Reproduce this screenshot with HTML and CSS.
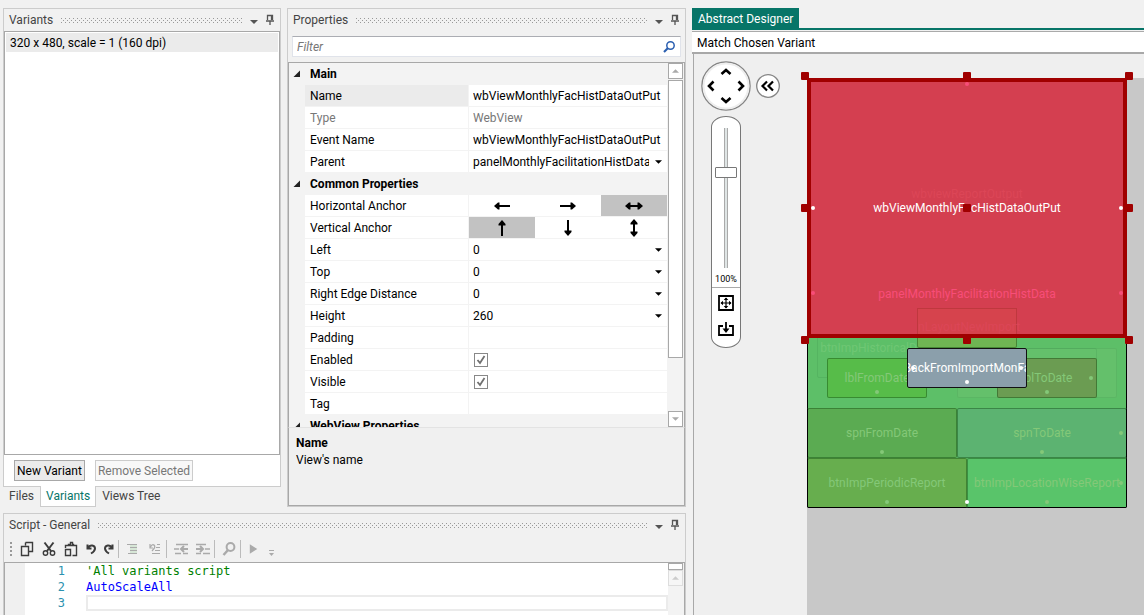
FILE: index.html
```html
<!DOCTYPE html>
<html lang="en">
    <head>
        <title>Abstract Designer</title>
        <meta charset="utf-8">
        <meta name="viewport" content="width=device-width, initial-scale=1.0">
        <link rel="stylesheet" href="styles.css">
    </head>
    <body>
        <svg class="defs" width="0" height="0">
            <symbol id="pin" viewBox="0 0 8 12"><path d="M1.5 6V1.5h5V6M5.5 1v5M0 7h8M4 7v4" fill="none" stroke="#555" stroke-width="1.3"/></symbol>
            <symbol id="caret" viewBox="0 0 8 4"><path d="M0 0h8L4 4z" fill="currentColor"/></symbol>
            <symbol id="fold" viewBox="0 0 8 8"><path d="M7 0.5V7H0.5z" fill="#222"/></symbol>
            <symbol id="arrow" viewBox="0 0 18 10"><path d="M3 5h14" stroke="#000" stroke-width="2"/><path d="M1 5l4-3.500h1.500v7H5z"/></symbol>
            <symbol id="arrow2" viewBox="0 0 18 10"><path d="M3 5h12" stroke="#000" stroke-width="2"/><path d="M0 5l4-3.500h1.500v7H4zM18 5l-4-3.500h-1.500v7H14z"/></symbol>
        </svg>
        <div class="workspace">
            <div class="docks">
                <div class="side">
                    <section class="pane variants">
                        <header class="pane-head">
                            <span>Variants</span><i class="grip"></i>
                            <svg class="caret" width="8" height="4"><use href="#caret"/></svg>
                            <svg width="8" height="12"><use href="#pin"/></svg>
                        </header>
                        <ul class="list">
                            <li>320 x 480, scale = 1 (160 dpi)</li>
                        </ul>
                        <div class="actions">
                            <button type="button" class="btn">New Variant</button>
                            <button type="button" class="btn" disabled>Remove Selected</button>
                        </div>
                    </section>
                    <nav class="tabs">
                        <a href="#files">Files</a>
                        <a href="#variants" class="active">Variants</a>
                        <a href="#views">Views Tree</a>
                    </nav>
                </div>

                <section class="pane properties">
                    <header class="pane-head">
                        <span>Properties</span><i class="grip"></i>
                        <svg class="caret" width="8" height="4"><use href="#caret"/></svg>
                        <svg width="8" height="12"><use href="#pin"/></svg>
                    </header>
                    <div class="filter">
                        <input type="text" placeholder="Filter" aria-label="Filter">
                        <svg width="12" height="12" viewBox="0 0 12 12"><path d="M5 7L1 11" stroke="#2b5fb0" stroke-width="2.2"/><circle cx="7.500" cy="4.500" r="3.700" fill="none" stroke="#2b5fb0" stroke-width="1.500"/></svg>
                    </div>
                    <div class="grid-box">
                        <div class="props">
                            <h2><svg width="8" height="8"><use href="#fold"/></svg>Main</h2>
                            <div class="prop selected"><label for="name">Name</label><div><input id="name" type="text" value="wbViewMonthlyFacHistDataOutPut"></div></div>
                            <div class="prop off"><label for="type">Type</label><div><input id="type" type="text" value="WebView" disabled></div></div>
                            <div class="prop"><label for="event">Event Name</label><div><input id="event" type="text" value="wbViewMonthlyFacHistDataOutPut"></div></div>
                            <div class="prop"><label for="parent">Parent</label><div><select id="parent"><option>panelMonthlyFacilitationHistData</option></select><svg class="drop" width="7" height="4"><use href="#caret"/></svg></div></div>
                            <h2><svg width="8" height="8"><use href="#fold"/></svg>Common Properties</h2>
                            <div class="prop"><span>Horizontal Anchor</span>
                                <div>
                                    <button type="button" class="anchor" aria-label="Left"><svg width="18" height="10"><use href="#arrow"/></svg></button>
                                    <button type="button" class="anchor" aria-label="Right"><svg class="right" width="18" height="10"><use href="#arrow"/></svg></button>
                                    <button type="button" class="anchor on" aria-label="Both"><svg width="18" height="10"><use href="#arrow2"/></svg></button>
                                </div>
                            </div>
                            <div class="prop"><span>Vertical Anchor</span>
                                <div>
                                    <button type="button" class="anchor on" aria-label="Top"><svg class="up" width="18" height="10"><use href="#arrow"/></svg></button>
                                    <button type="button" class="anchor" aria-label="Bottom"><svg class="down" width="18" height="10"><use href="#arrow"/></svg></button>
                                    <button type="button" class="anchor" aria-label="Both"><svg class="up" width="18" height="10"><use href="#arrow2"/></svg></button>
                                </div>
                            </div>
                            <div class="prop"><label for="left">Left</label><div><select id="left"><option>0</option></select><svg class="drop" width="7" height="4"><use href="#caret"/></svg></div></div>
                            <div class="prop"><label for="top">Top</label><div><select id="top"><option>0</option></select><svg class="drop" width="7" height="4"><use href="#caret"/></svg></div></div>
                            <div class="prop"><label for="red">Right Edge Distance</label><div><select id="red"><option>0</option></select><svg class="drop" width="7" height="4"><use href="#caret"/></svg></div></div>
                            <div class="prop"><label for="height">Height</label><div><select id="height"><option>260</option></select><svg class="drop" width="7" height="4"><use href="#caret"/></svg></div></div>
                            <div class="prop"><label for="padding">Padding</label><div><input id="padding" type="text"></div></div>
                            <div class="prop"><label for="enabled">Enabled</label><div><input id="enabled" type="checkbox" checked></div></div>
                            <div class="prop"><label for="visible">Visible</label><div><input id="visible" type="checkbox" checked></div></div>
                            <div class="prop"><label for="tag">Tag</label><div><input id="tag" type="text"></div></div>
                            <h2><svg width="8" height="8"><use href="#fold"/></svg>WebView Properties</h2>
                        </div>
                        <div class="scroll">
                            <button type="button" aria-label="Scroll up"><svg class="flip" width="7" height="4"><use href="#caret"/></svg></button>
                            <div class="track"><div class="thumb"></div></div>
                            <button type="button" aria-label="Scroll down"><svg width="7" height="4"><use href="#caret"/></svg></button>
                        </div>
                    </div>
                    <div class="help">
                        <b>Name</b>
                        <p>View's name</p>
                    </div>
                </section>

                <section class="pane script">
                    <header class="pane-head">
                        <span>Script - General</span><i class="grip"></i>
                        <svg class="caret" width="8" height="4"><use href="#caret"/></svg>
                        <svg width="8" height="12"><use href="#pin"/></svg>
                    </header>
                    <div class="toolbar">
                        <i class="handle"></i>
                        <button type="button" aria-label="Copy"><svg viewBox="0 0 16 16"><path d="M6.500 1.500h7v9h-4M6.500 1.500v3M2.500 5.500h7v9h-7z"/></svg></button>
                        <button type="button" aria-label="Cut"><svg viewBox="0 0 16 16"><path d="M3.500 1.500L10 10M12.500 1.500L6 10" stroke-width="2"/><circle cx="4.500" cy="12" r="2.200"/><circle cx="11.500" cy="12" r="2.200"/></svg></button>
                        <button type="button" aria-label="Paste"><svg viewBox="0 0 16 16"><path d="M2.500 7V4.500h11v10h-4M5.500 4.500v-1h2v-2h2v2h1v1M2.500 8.500h5v6h-5z"/></svg></button>
                        <button type="button" class="small" aria-label="Undo"><svg viewBox="0 0 16 16"><path d="M4.500 3.500v4h4M5 7c2-4 7-3 7 .500 0 2-1.500 3.500-4 5" stroke-width="2"/></svg></button>
                        <button type="button" class="small" aria-label="Redo"><svg viewBox="0 0 16 16"><path d="M11.500 3.500v4h-4M11 7c-2-4-7-3-7 .500 0 2 1.500 3.500 4 5" stroke-width="2"/></svg></button>
                        <i class="sep"></i>
                        <button type="button" class="dim" aria-label="Comment"><svg viewBox="0 0 16 16"><path d="M2 3.500h10M5 6.500h7M5 9.500h7M3 12.500h9" stroke-width="1"/><path d="M5 8h7M5 11h7M5 5h7" stroke="#bcdcbc" stroke-width="1"/></svg></button>
                        <button type="button" class="dim" aria-label="Uncomment"><svg viewBox="0 0 16 16"><path d="M10 3.500h3M9 6.500h4M8 9.500h5M5 12.500h8M3 3v4h3M3.500 6c2-4 5-2 4 1L5 10" stroke-width="1.200"/></svg></button>
                        <i class="sep"></i>
                        <button type="button" class="dim" aria-label="Outdent"><svg viewBox="0 0 16 16"><path d="M3 3.500h12M2 12.500h6M10 12.500h5M1 8h5" stroke-width="1.500"/><path d="M15 8H8M11 5L8 8l3 3" stroke-width="2"/></svg></button>
                        <button type="button" class="dim" aria-label="Indent"><svg viewBox="0 0 16 16"><path d="M1 3.500h10M1 12.500h5M8 12.500h7M10 8h5" stroke-width="1.500"/><path d="M1 8h7M5 5l3 3-3 3" stroke-width="2"/></svg></button>
                        <i class="sep"></i>
                        <button type="button" class="dim" aria-label="Find"><svg viewBox="0 0 16 16"><circle cx="9.500" cy="6" r="3.900" stroke-width="2"/><path d="M7 9l-4.500 5" stroke-width="2.500"/></svg></button>
                        <i class="sep"></i>
                        <button type="button" class="dim small" aria-label="Run"><svg viewBox="0 0 16 16"><path d="M5.500 4.500v7L11 8z" fill="#aaa"/></svg></button>
                        <button type="button" class="dim small" aria-label="More"><svg viewBox="0 0 16 16"><path d="M6 9.500h5" stroke-width="1"/><path d="M6 12h5l-2.500 3z" fill="#aaa" stroke="none"/></svg></button>
                    </div>
                    <div class="editor">
                        <div class="margin"></div>
                        <div class="numbers">1<br>2<br>3</div>
                        <div class="code">
                            <div class="comment">'All variants script</div>
                            <div class="keyword">AutoScaleAll</div>
                            <div class="current"></div>
                        </div>
                        <div class="scroll">
                            <i class="split"></i>
                            <button type="button" disabled aria-label="Scroll up"><svg class="flip" width="7" height="4"><use href="#caret"/></svg></button>
                        </div>
                    </div>
                </section>
            </div>

            <main class="designer">
                <h1>Abstract Designer</h1>
                <div class="match">Match Chosen Variant</div>
                <div class="canvas">
                    <div class="tools">
                        <svg class="pan" width="50" height="50" viewBox="0 0 50 50">
                            <circle cx="25" cy="25" r="24" fill="#fff" stroke="#858585" stroke-width="1.500"/>
                            <circle cx="25" cy="25" r="22.500" fill="none" stroke="#eee" stroke-width="2"/>
                            <path d="M20.500 13l4.500-4 4.500 4M20.500 37l4.500 4 4.500-4M12.500 20.500L8 25l4.500 4.500M37.500 20.500L42 25l-4.500 4.500" fill="none" stroke="#000" stroke-width="2.600"/>
                        </svg>
                        <svg class="collapse" width="24" height="24" viewBox="0 0 24 24">
                            <circle cx="12" cy="12" r="11.300" fill="#fff" stroke="#858585" stroke-width="1.300"/>
                            <path d="M11 7.500L6.500 12l4.500 4.500M17 7.500L12.500 12l4.500 4.500" fill="none" stroke="#000" stroke-width="2.200"/>
                        </svg>
                        <div class="zoom">
                            <input type="range" min="0" max="100" value="70" aria-label="Zoom">
                            <span>100%</span>
                            <button type="button" aria-label="Fit"><svg width="16" height="16" viewBox="0 0 16 16"><path d="M1 1h14v14H1z" fill="none" stroke="#000" stroke-width="1.800"/><path d="M3 8h10M8 3v10" stroke="#000" stroke-width="1.200"/><path d="M8 2.500l2.300 2.500H5.700zM8 13.500l2.300-2.500H5.700zM2.500 8L5 5.700v4.600zM13.500 8L11 5.700v4.600z"/></svg></button>
                            <button type="button" aria-label="Import"><svg width="16" height="16" viewBox="0 0 16 16"><path d="M5 5H1v9h14V5h-4" fill="none" stroke="#000" stroke-width="1.800"/><path d="M8 1v8" stroke="#000" stroke-width="1.800"/><path d="M4.500 7.500h7L8 12z"/></svg></button>
                        </div>
                    </div>
                    <div class="stage">
                        <div class="view panel"></div>
                        <div class="view ghost hist">btnImpHistoricalData</div>
                        <div class="view ghost area"></div>
                        <div class="view ghost strip"></div>
                        <div class="view layout-new"></div>
                        <div class="view lbl-from">lblFromDate<i class="dot bottom"></i></div>
                        <div class="view lbl-to">lblToDate<i class="dot bottom"></i><i class="dot east"></i></div>
                        <div class="view spn-from">spnFromDate<i class="dot bottom"></i></div>
                        <div class="view spn-to">spnToDate<i class="dot bottom"></i><i class="dot east"></i></div>
                        <div class="view periodic">btnImpPeriodicReport<i class="dot bottom"></i></div>
                        <div class="view location">btnImpLocationWiseReport<i class="dot bottom"></i><i class="dot east"></i></div>
                        <div class="view back"><span>BackFromImportMonFa</span><i class="dot bottom"></i><i class="dot west"></i><i class="dot east"></i></div>
                        <i class="dot panel-dot"></i>
                        <div class="view web">
                            <span class="under layout-under">nLayoutNewImport</span>
                            <span class="under report">wbviewReportOutput</span>
                            <span class="under parent-name">panelMonthlyFacilitationHistData</span>
                            <span class="title">wbViewMonthlyFacHistDataOutPut</span>
                            <i class="dot west"></i><i class="dot east"></i>
                            <i class="dot pink top"></i><i class="dot pink low-west"></i><i class="dot pink low-east"></i>
                        </div>
                        <i class="knob nw"></i><i class="knob n"></i><i class="knob ne"></i>
                        <i class="knob w"></i><i class="knob c"></i><i class="knob e"></i>
                        <i class="knob sw"></i><i class="knob s"></i><i class="knob se"></i>
                    </div>
                </div>
            </main>
        </div>
    </body>
</html>
```
FILE: styles.css
```css
:root {
    --chrome: #f1f1f1;
    --line: #cccccc;
    --dark-line: #a8a8a8;
    --teal: #077568;
}
* {
    box-sizing: border-box;
}
body {
    margin: 0;
    background: var(--chrome);
    color: #000;
    font: 12px/16px Roboto, "Open Sans", sans-serif;
}
button, input, select {
    font: inherit;
    color: inherit;
    border: 0;
    padding: 0;
    margin: 0;
    background: none;
}
.defs {
    position: absolute;
}
.workspace {
    display: grid;
    grid-template-columns: 683px minmax(0, 1fr);
    gap: 6px;
    height: 100vh;
    padding: 8px 0 0 3px;
    overflow: hidden;
}

/* docked panes */
.docks {
    display: grid;
    grid-template-columns: 278px minmax(0, 1fr);
    grid-template-rows: minmax(0, 1fr) 102px;
    gap: 6px;
    min-height: 0;
}
.side {
    display: flex;
    flex-direction: column;
}
.pane {
    display: flex;
    flex-direction: column;
    min-height: 0;
    border: 1px solid var(--line);
}
.pane-head {
    display: flex;
    align-items: center;
    flex: none;
    height: 22px;
    padding: 0 6px 0 5px;
    color: #444;
}
.grip {
    flex: 1;
    height: 5px;
    margin: 0 8px;
    background: url("data:image/svg+xml,%3Csvg xmlns='http://www.w3.org/2000/svg' width='4' height='4'%3E%3Cpath d='M0 0h1v1H0zM2 2h1v1H2z' fill='%23999'/%3E%3C/svg%3E");
}
.caret {
    margin: 3px 8px 0 0;
    color: #555;
}
.variants {
    flex: 1;
    background: #fff;
}
.variants .pane-head {
    background: var(--chrome);
}
.list {
    flex: 1;
    margin: 0;
    padding: 1px;
    border: 1px solid var(--dark-line);
    list-style: none;
}
.list li {
    height: 19px;
    padding: 2px 4px 1px;
    background: #ebebeb;
}
.actions {
    display: flex;
    gap: 10px;
    padding: 5px 10px;
}
.btn {
    height: 21px;
    padding: 0 2px;
    border: 1px solid var(--dark-line);
    background: #ebebeb;
}
.btn:disabled {
    border-color: #ccc;
    background: #f8f8f8;
    color: #777;
}
.tabs {
    display: flex;
    height: 20px;
}
.tabs a {
    padding: 1px 6px;
    color: #444;
    text-decoration: none;
}
.tabs .active {
    margin-top: -1px;
    padding: 2px 5px;
    border: 1px solid var(--line);
    border-top: 0;
    background: #fff;
    color: var(--teal);
}

/* properties */
.filter {
    display: flex;
    align-items: center;
    flex: none;
    height: 21px;
    margin: 5px 4px;
    padding: 0 5px 0 4px;
    border: 1px solid #e0e3ea;
    border-top-color: #abadb3;
    background: #fff;
}
.filter input {
    flex: 1;
    outline: 0;
}
.filter input::placeholder {
    color: #777;
    font-style: italic;
}
.grid-box {
    display: flex;
    flex: 1;
    min-height: 0;
    border: 1px solid var(--dark-line);
    border-bottom: 0;
    background: #f3f3f3;
}
.props {
    flex: 1;
    min-width: 0;
    overflow: hidden;
}
.props h2 {
    display: flex;
    align-items: center;
    gap: 9px;
    height: 22px;
    margin: 0;
    padding-left: 4px;
    font-size: 12px;
}
.prop {
    display: grid;
    grid-template-columns: 163px minmax(0, 1fr);
    gap: 1px;
    height: 22px;
    padding: 0 1px 1px 16px;
}
.prop > * {
    display: flex;
    align-items: center;
    padding-left: 5px;
    background: #fff;
}
.prop > div {
    position: relative;
    padding-left: 4px;
}
.prop input[type="text"], .prop select {
    width: 100%;
    outline: 0;
}
.prop select {
    appearance: none;
    padding-right: 18px;
}
.drop {
    position: absolute;
    right: 5px;
}
.selected > label {
    background: #ebebeb;
}
.off {
    color: #777;
}
.prop > div:has(.anchor) {
    padding: 0;
}
.anchor {
    display: grid;
    place-items: center;
    flex: 1;
    height: 21px;
}
.anchor.on {
    background: #c2c2c2;
}
.right {
    transform: rotate(180deg);
}
.up {
    transform: rotate(90deg);
}
.down {
    transform: rotate(-90deg);
}
.flip {
    transform: scaleY(-1);
}
.prop input[type="checkbox"] {
    appearance: none;
    width: 14px;
    height: 14px;
    margin-left: 1px;
    border: 1px solid #888;
    background: url("data:image/svg+xml,%3Csvg xmlns='http://www.w3.org/2000/svg' width='12' height='12'%3E%3Cpath d='M2.500 6L5 9L9.500 2' fill='none' stroke='%23707070' stroke-width='1.800'/%3E%3C/svg%3E");
}
.scroll {
    display: flex;
    flex-direction: column;
    flex: none;
    width: 16px;
    padding-right: 1px;
    color: #aaa;
}
.scroll button {
    display: grid;
    place-items: center;
    height: 16px;
    border: 1px solid var(--dark-line);
    background: #fff;
}
.scroll button:disabled {
    border-color: #ddd;
    background: #f6f6f6;
    color: #ccc;
}
.track {
    flex: 1;
    padding-top: 1px;
}
.thumb {
    height: 84%;
    border: 1px solid var(--dark-line);
    background: #fff;
}
.help {
    flex: none;
    height: 79px;
    padding: 7px;
    border: 1px solid var(--dark-line);
    border-top-color: #e3e3e3;
    background: #f0f0f0;
}
.help p {
    margin: 1px 0;
}

/* script */
.script {
    grid-column: 1 / 3;
    border-bottom: 0;
}
.toolbar {
    display: flex;
    align-items: center;
    height: 26px;
    padding-left: 6px;
}
.toolbar button {
    width: 22px;
    height: 16px;
}
.toolbar .small {
    width: 18px;
}
.toolbar svg {
    display: block;
    width: 16px;
    height: 16px;
    margin: auto;
    fill: none;
    stroke: #3c3c3c;
    stroke-width: 1.4;
}
.toolbar .dim svg {
    stroke: #aaa;
}
.handle {
    width: 2px;
    height: 14px;
    margin-right: 4px;
    background: repeating-linear-gradient(#999 0 2px, transparent 2px 4px);
}
.sep {
    width: 1px;
    height: 18px;
    margin-right: 3px;
    background: #bbb;
}
.editor {
    display: flex;
    flex: 1;
    border: 1px solid var(--dark-line);
    border-bottom: 0;
    background: #fff;
    font: 12px/16px "DejaVu Sans Mono", monospace;
}
.margin {
    width: 20px;
    background: #f0f0f0;
}
.numbers {
    width: 40px;
    color: #2b91af;
    text-align: right;
}
.code {
    flex: 1;
    padding-left: 21px;
}
.comment {
    color: #008000;
}
.keyword {
    color: #0000ff;
}
.current {
    height: 16px;
    border: 2px solid #ebebeb;
}
.editor .scroll {
    background: #f3f3f3;
}
.split {
    height: 7px;
    border: 1px solid var(--dark-line);
    background: #fff;
}

/* designer */
.designer {
    display: flex;
    flex-direction: column;
    min-width: 0;
}
.designer h1 {
    align-self: flex-start;
    height: 20px;
    margin: 0;
    padding: 3px 6px 1px;
    background: var(--teal);
    color: #fff;
    font-size: 12px;
    font-weight: normal;
}
.match {
    height: 26px;
    padding: 5px 5px 3px;
    border-top: 2px solid var(--teal);
    border-bottom: 2px solid var(--dark-line);
    background: linear-gradient(#f1f1f1 1px, #aaa 1px 2px, #fff 2px);
}
.canvas {
    position: relative;
    flex: 1;
    border-left: 1px solid var(--dark-line);
    margin-left: 1px;
    background: #efefef;
    overflow: hidden;
}
.tools {
    display: grid;
    grid-template-columns: 50px 24px;
    gap: 5px;
    align-items: center;
    justify-items: center;
    width: 79px;
    margin: 7px;
}
.zoom {
    display: flex;
    flex-direction: column;
    align-items: center;
    width: 30px;
    height: 232px;
    padding-top: 11px;
    border: 1px solid #777;
    border-radius: 15px / 11px;
    background: #fff;
}
.zoom input {
    appearance: none;
    width: 22px;
    height: 140px;
    writing-mode: vertical-lr;
    direction: rtl;
    background: linear-gradient(90deg, #aaa 1px, #dfe5e5 1px 3px, #aaa 3px) center / 4px 100% no-repeat;
}
.zoom input::-webkit-slider-thumb {
    appearance: none;
    width: 22px;
    height: 11px;
    border: 1px solid #777;
    border-radius: 1px;
    background: #fff;
}
.zoom span {
    align-self: stretch;
    margin-bottom: 7px;
    padding-top: 3px;
    border-bottom: 1px solid #aaa;
    font-size: 9px;
    text-align: center;
}
.zoom button {
    height: 16px;
    margin-bottom: 10px;
}
.zoom svg {
    display: block;
}
.stage {
    position: absolute;
    left: 113px;
    top: 24px;
    right: 0;
    bottom: 0;
    background: #c8c8c8;
}
.view {
    position: absolute;
    display: grid;
    place-items: center;
    border: 1px solid rgba(20, 80, 20, 0.45);
    border-radius: 2px;
    color: #84c878;
    white-space: nowrap;
}
.panel {
    left: 0;
    top: 0;
    width: 320px;
    height: 430px;
    border-color: #000;
    background: #5dbf68;
}
.ghost {
    border-color: rgba(40, 120, 60, 0.15);
    color: #6fc774;
}
.hist {
    left: 10px;
    top: 240px;
    width: 120px;
    height: 60px;
}
.area {
    left: 150px;
    top: 270px;
    width: 160px;
    height: 50px;
    background: rgba(130, 200, 120, 0.2);
}
.strip {
    left: 190px;
    top: 270px;
    width: 100px;
    height: 30px;
}
.layout-new {
    left: 110px;
    top: 230px;
    width: 100px;
    height: 40px;
    background: #6fb553;
}
.lbl-from {
    left: 20px;
    top: 280px;
    width: 100px;
    height: 40px;
    background: #57bc49;
}
.lbl-to {
    left: 190px;
    top: 280px;
    width: 100px;
    height: 40px;
    background: #6b9c52;
}
.spn-from {
    left: 0;
    top: 330px;
    width: 150px;
    height: 50px;
    background: #5bab52;
}
.spn-to {
    left: 150px;
    top: 330px;
    width: 170px;
    height: 50px;
    background: #5cb371;
}
.periodic {
    left: 0;
    top: 380px;
    width: 160px;
    height: 50px;
    background: #67ae4e;
}
.location {
    left: 160px;
    top: 380px;
    width: 160px;
    height: 50px;
    background: #59c46a;
}
.spn-from, .periodic {
    border-left-color: #000;
}
.spn-to, .location {
    border-right-color: #000;
}
.periodic, .location {
    border-bottom-color: #000;
}
.back {
    left: 100px;
    top: 270px;
    width: 120px;
    height: 40px;
    overflow: hidden;
    border-color: #111;
    background: #8b9fab;
    color: #fff;
}
.back span {
    margin: 0 -30px;
}
.web {
    left: 0;
    top: 0;
    width: 320px;
    height: 260px;
    border: 4px solid #a00000;
    border-radius: 0;
    background: #d43f50;
    color: #fff;
}
.under {
    position: absolute;
    color: #dc4657;
}
.report {
    top: 104px;
}
.layout-under {
    left: 106px;
    top: 226px;
    width: 100px;
    height: 26px;
    padding-top: 10px;
    border: 1px solid #bf383e;
    border-bottom: 0;
    background: #d6434d;
    text-align: center;
}
.parent-name {
    top: 204px;
    color: #f84d78;
}
.dot {
    position: absolute;
    width: 4px;
    height: 4px;
    border-radius: 2px;
    background: currentColor;
}
.bottom {
    bottom: 3px;
    left: calc(50% - 2px);
}
.west {
    left: 3px;
    top: calc(50% - 2px);
}
.east {
    right: 3px;
    top: calc(50% - 2px);
}
.web .west {
    left: 0;
}
.web .east {
    right: 0;
}
.pink {
    background: #f84d78;
}
.top {
    top: 0;
    left: calc(50% - 2px);
}
.low-west {
    left: 0;
    bottom: 39px;
}
.low-east {
    right: 0;
    bottom: 39px;
}
.panel-dot {
    left: 158px;
    top: 422px;
    background: #fff;
}
.knob {
    position: absolute;
    width: 8px;
    height: 8px;
    border-radius: 1px;
    background: #a00000;
}
.nw, .n, .ne {
    top: -6px;
}
.w, .c, .e {
    top: 126px;
}
.sw, .s, .se {
    top: 258px;
}
.nw, .w, .sw {
    left: -6px;
}
.n, .c, .s {
    left: 156px;
}
.ne, .e, .se {
    left: 318px;
}
```
